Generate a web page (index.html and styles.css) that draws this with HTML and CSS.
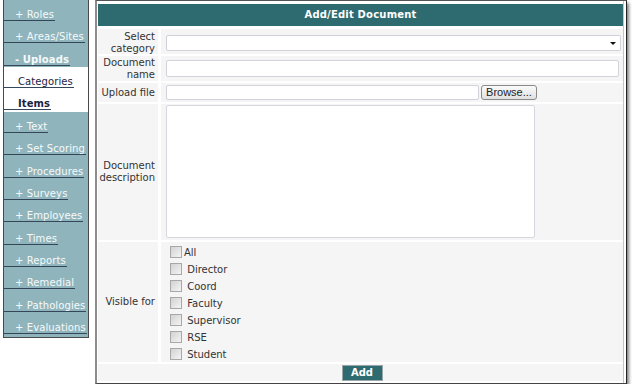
FILE: index.html
```html
<!DOCTYPE html>
<html>
<head>
<meta charset="utf-8">
<link rel="stylesheet" href="styles.css">
</head>
<body>
<div class="window">
  <nav class="sidebar">
    <ul class="menu">
      <li class="item"><a class="link">+ Roles</a></li>
      <li class="item"><a class="link">+ Areas/Sites</a></li>
      <li class="item"><a class="link bold">- Uploads</a></li>
      <li class="item sub"><a class="link">Categories</a></li>
      <li class="item sub"><a class="link bold">Items</a></li>
      <li class="item"><a class="link">+ Text</a></li>
      <li class="item"><a class="link">+ Set Scoring</a></li>
      <li class="item"><a class="link">+ Procedures</a></li>
      <li class="item"><a class="link">+ Surveys</a></li>
      <li class="item"><a class="link">+ Employees</a></li>
      <li class="item"><a class="link">+ Times</a></li>
      <li class="item"><a class="link">+ Reports</a></li>
      <li class="item"><a class="link">+ Remedial</a></li>
      <li class="item"><a class="link">+ Pathologies</a></li>
      <li class="item"><a class="link">+ Evaluations</a></li>
    </ul>
  </nav>
  <section class="panel">
    <form class="form">
      <div class="title">Add/Edit Document</div>

      <div class="label first">Select<br>category</div>
      <div class="value first"><div class="selectwrap"><select class="select"><option></option></select></div></div>

      <div class="label">Document<br>name</div>
      <div class="value"><input class="text name" type="text"></div>

      <div class="label">Upload file</div>
      <div class="value"><input class="text file" type="text"><button class="browse" type="button">Browse...</button></div>

      <div class="label">Document<br>description</div>
      <div class="value top"><textarea class="area"></textarea></div>

      <div class="label">Visible for</div>
      <div class="value"><div class="checks">
        <label class="check"><input class="box" type="checkbox">All</label>
        <label class="check"><input class="box" type="checkbox">&nbsp;Director</label>
        <label class="check"><input class="box" type="checkbox">&nbsp;Coord</label>
        <label class="check"><input class="box" type="checkbox">&nbsp;Faculty</label>
        <label class="check"><input class="box" type="checkbox">&nbsp;Supervisor</label>
        <label class="check"><input class="box" type="checkbox">&nbsp;RSE</label>
        <label class="check"><input class="box" type="checkbox">&nbsp;Student</label>
      </div></div>

      <div class="actions"><button class="add" type="button">Add</button></div>
    </form>
  </section>
</div>
</body>
</html>
```
FILE: styles.css
```css
html, body {
  margin: 0;
  padding: 0;
  background: #fff;
}
body {
  font-family: "DejaVu Sans", Verdana, sans-serif;
  font-size: 10px;
  color: #333;
}
.window {
  width: 627px;
  height: 384px;
  display: flex;
  align-items: flex-start;
  background: #fff;
  box-shadow: 2px 3px 3px rgba(0, 0, 0, 0.5);
}
.sidebar {
  margin-left: 3px;
  width: 84px;
  background: #8fb4bc;
  border: 1px solid #4a4a4a;
  border-top: 0;
  padding-bottom: 2px;
}
.menu {
  list-style: none;
  margin: 0;
  padding: 0;
}
.item {
  height: 22.36px;
  box-sizing: border-box;
  padding-top: 9px;
}
.link {
  display: inline-block;
  line-height: 10px;
  padding-left: 11px;
  padding-right: 1px;
  color: #f6fafa;
  border-bottom: 1px solid #34465a;
  white-space: nowrap;
  letter-spacing: 0.1px;
  cursor: pointer;
}
.bold {
  font-weight: bold;
}
.sub {
  background: #fff;
}
.sub .link {
  padding-left: 14px;
  color: #1c2440;
}
.panel {
  margin-left: 6px;
  width: 525px;
  height: 377px;
  border-top: 1px solid #555;
  border-left: 2px solid #8c8c8c;
  border-right: 1px solid #222;
  border-bottom: 1px solid #444;
  padding: 3px 3px 2px 1px;
  box-shadow: inset -2px 0 0 #fff, inset -3px 0 0 #c4c4c4;
}
.form {
  margin: 0;
  height: 377px;
  display: grid;
  grid-template-columns: 60px 1fr;
  grid-template-rows: 23px 25px 25px 19px 136px 120px 17px;
  column-gap: 3px;
  row-gap: 2px;
}
.title {
  grid-column: 1 / -1;
  height: 22px;
  margin-bottom: 1px;
  background: #2e6b70;
  color: #fff;
  font-weight: bold;
  letter-spacing: 0.2px;
  line-height: 22px;
  text-align: center;
}
.label {
  background: #f5f5f5;
  display: flex;
  align-items: center;
  justify-content: flex-end;
  text-align: right;
  padding-right: 3px;
  line-height: 12px;
  color: #333;
}
.value {
  background: #f5f5f5;
  display: flex;
  align-items: center;
  padding-left: 5px;
}
.first {
  padding-top: 3px;
}
.value.top {
  align-items: flex-start;
}
.selectwrap {
  position: relative;
  width: 455px;
  height: 16px;
}
.selectwrap::after {
  content: "";
  position: absolute;
  right: 5px;
  top: 7px;
  border-left: 3px solid transparent;
  border-right: 3px solid transparent;
  border-top: 3px solid #111;
}
.select {
  appearance: none;
  -webkit-appearance: none;
  box-sizing: border-box;
  width: 455px;
  height: 16px;
  margin: 0;
  border: 1px solid #cfd0da;
  border-radius: 2px;
  background: #fff;
  font: inherit;
}
.text {
  box-sizing: border-box;
  margin: 0;
  padding: 0 2px;
  border: 1px solid #d2d3da;
  border-radius: 2px;
  background: #fff;
  font: inherit;
}
.name {
  width: 453px;
  height: 17px;
}
.file {
  width: 313px;
  height: 15px;
}
.browse {
  box-sizing: border-box;
  width: 56px;
  height: 15px;
  margin: 0 0 0 2px;
  padding: 0;
  border: 1px solid #8a8a8a;
  border-radius: 3px;
  background: linear-gradient(#fbfbfb, #e0e0e0);
  font-family: "Liberation Sans", Arial, sans-serif;
  font-size: 11px;
  line-height: 13px;
  color: #222;
}
.area {
  box-sizing: border-box;
  width: 369px;
  height: 133px;
  margin: 1px 0 0 0;
  border: 1px solid #d6d7de;
  border-radius: 2px;
  background: #fff;
  resize: none;
  font: inherit;
}
.checks {
  display: flex;
  flex-direction: column;
  padding-top: 2px;
}
.check {
  height: 17px;
  display: flex;
  align-items: center;
  color: #333;
}
.box {
  appearance: none;
  -webkit-appearance: none;
  box-sizing: border-box;
  width: 12px;
  height: 12px;
  margin: 0 2px 0 4px;
  border: 1px solid #a8a8a8;
  background: linear-gradient(135deg, #d2d2d2, #f4f4f4);
}
.actions {
  grid-column: 1 / -1;
  background: #f5f5f5;
  display: flex;
  justify-content: center;
  align-items: center;
}
.add {
  box-sizing: border-box;
  width: 41px;
  height: 16px;
  margin: 0 0 0 3px;
  padding: 0;
  border: 1px solid #9aa6a8;
  background: #2e6b70;
  color: #fff;
  font-family: "DejaVu Sans", Verdana, sans-serif;
  font-size: 10px;
  font-weight: bold;
  line-height: 14px;
}
```
